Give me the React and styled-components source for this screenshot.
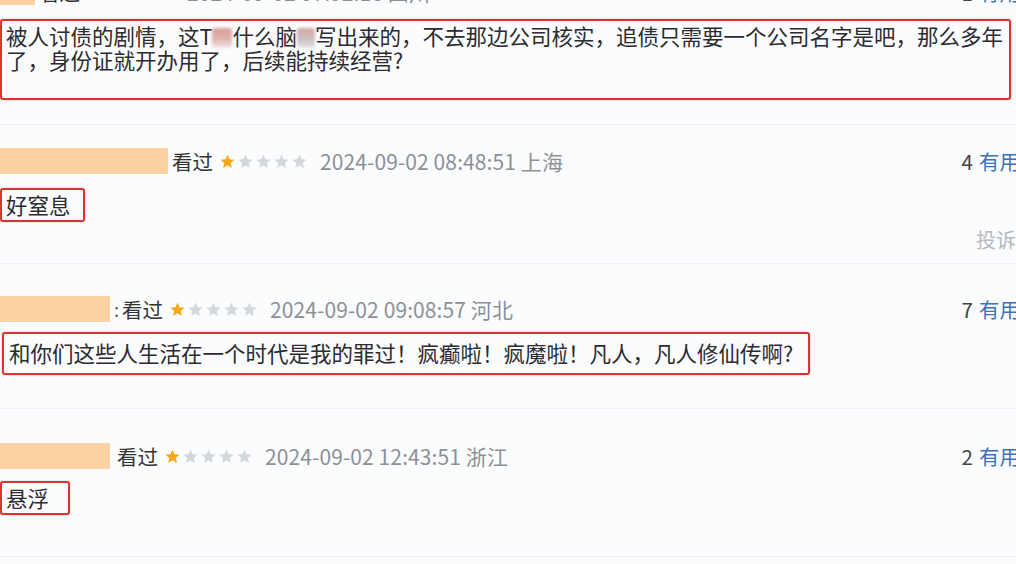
import React from "react";
import styled, { createGlobalStyle } from "styled-components";

const Global = createGlobalStyle`
  html, body { margin: 0; padding: 0; background: #fbfcfe; overflow: hidden; }
  body { font-family: "Noto Sans CJK SC", "Noto Sans", sans-serif; color: #333; }
`;

const Page = styled.div`
  display: flex;
  flex-direction: column;
  width: 1016px;
  height: 564px;
  overflow: hidden;
  background: #fbfcfe;
`;

const Review = styled.section`
  display: flex;
  flex-direction: column;
  align-items: flex-start;
  padding: ${(p) => p.$pt}px 0 ${(p) => p.$pb}px;
  border-bottom: 1.5px solid #eceef2;
`;

const Header = styled.div`
  display: flex;
  align-items: center;
  align-self: stretch;
  height: 26px;
  margin-top: ${(p) => p.$mt || 0}px;
  font-size: 20.5px;
  line-height: 26px;
  white-space: nowrap;
`;

const NameMask = styled.span`
  display: inline-block;
  width: ${(p) => p.$w}px;
  height: 26px;
  background: #fdd2a2;
  filter: blur(0.4px);
`;

const Colon = styled.span`
  color: #555;
  margin-left: 4px;
  font-size: 18px;
`;

const Watched = styled.span`
  color: #333;
  margin-left: ${(p) => p.$ml ?? 4}px;
`;

const StarRow = styled.span`
  display: inline-flex;
  align-items: center;
  margin-left: 6px;
  gap: 1px;
`;

const Meta = styled.span`
  color: #8d9097;
  font-size: 21px;
  margin-left: 12px;
  letter-spacing: 0.1px;
`;

const Useful = styled.span`
  margin-left: auto;
  margin-right: -4px;
  font-size: 20.5px;
  color: #444;
`;

const UsefulLink = styled.span`
  color: #3c72b6;
  margin-left: 6px;
`;

const CommentBox = styled.div`
  box-sizing: border-box;
  width: ${(p) => p.$w}px;
  height: ${(p) => p.$h}px;
  margin-top: ${(p) => p.$mt}px;
  margin-left: ${(p) => p.$ml || 0}px;
  padding: ${(p) => p.$pad};
  border: 2.5px solid #d9342f;
  border-radius: 3px;
  box-shadow: 0 0 1.5px rgba(217, 52, 47, 0.55);
  font-size: 21.5px;
  line-height: ${(p) => p.$lh || 28}px;
  color: #2b2b30;
  white-space: ${(p) => (p.$wrap ? "normal" : "nowrap")};
  overflow: hidden;
`;

const Censor = styled.span`
  display: inline-block;
  width: ${(p) => p.$w}px;
  color: transparent;
  background: ${(p) => p.$bg};
  filter: blur(1.6px);
  border-radius: 3px;
  line-height: 20px;
  vertical-align: -2px;
`;

const Report = styled.div`
  align-self: flex-end;
  margin-top: ${(p) => p.$mt}px;
  margin-right: 0px;
  font-size: 20px;
  line-height: 24px;
  color: #b5b8be;
`;

const StarIcon = ({ on }) => (
  <svg width="17" height="17" viewBox="0 0 24 24">
    <path
      d="M12 2.2l2.9 6.6 7.1.6-5.4 4.7 1.6 7-6.2-3.7-6.2 3.7 1.6-7L2 9.4l7.1-.6z"
      fill={on ? "#f6a81d" : "#d3d6db"}
    />
  </svg>
);

const Stars = ({ n }) => (
  <StarRow>
    {[0, 1, 2, 3, 4].map((i) => (
      <StarIcon key={i} on={i < n} />
    ))}
  </StarRow>
);

const ReviewHeader = ({ mask, colon, date, count, mt, wml }) => (
  <Header $mt={mt}>
    <NameMask $w={mask} />
    {colon && <Colon>:</Colon>}
    <Watched $ml={wml}>看过</Watched>
    <Stars n={1} />
    <Meta>{date}</Meta>
    <Useful>
      {count}
      <UsefulLink>有用</UsefulLink>
    </Useful>
  </Header>
);

export default function App() {
  return (
    <Page>
      <Global />
      <Review $pt={0} $pb={24}>
        <ReviewHeader mask={35} date="2024-09-02 07:52:16 四川" count="1" mt={-21} />
        <CommentBox $w={1011} $h={81} $mt={14} $pad="3px 4px 0 4px" $lh={23} $wrap>
          被人讨债的剧情，这T
          <Censor $w={20} $bg="linear-gradient(180deg,#d99d97 0%,#e2b3ae 55%,#f0e6e6 100%)">M</Censor>
          什么脑
          <Censor $w={18} $bg="linear-gradient(180deg,#d7a6a1 0%,#c9c4c6 60%,#e4e4e6 100%)">残</Censor>
          写出来的，不去那边公司核实，追债只需要一个公司名字是吧，那么多年了，身份证就开办用了，后续能持续经营?
        </CommentBox>
      </Review>

      <Review $pt={23} $pb={11}>
        <ReviewHeader mask={168} date="2024-09-02 08:48:51 上海" count="4" />
        <CommentBox $w={85} $h={34} $mt={14} $pad="0 0 0 4px" $lh={29}>
          好窒息
        </CommentBox>
        <Report $mt={6}>投诉</Report>
      </Review>

      <Review $pt={32} $pb={33}>
        <ReviewHeader mask={110} colon date="2024-09-02 09:08:57 河北" count="7" wml={3} />
        <CommentBox $w={808} $h={43} $mt={10} $ml={2} $pad="3px 0 0 5px" $lh={32}>
          和你们这些人生活在一个时代是我的罪过！疯癫啦！疯魔啦！凡人，凡人修仙传啊?
        </CommentBox>
      </Review>

      <Review $pt={34} $pb={41}>
        <ReviewHeader mask={110} date="2024-09-02 12:43:51 浙江" count="2" wml={7} />
        <CommentBox $w={70} $h={34} $mt={12} $pad="0 0 0 4px" $lh={29}>
          悬浮
        </CommentBox>
      </Review>
    </Page>
  );
}
